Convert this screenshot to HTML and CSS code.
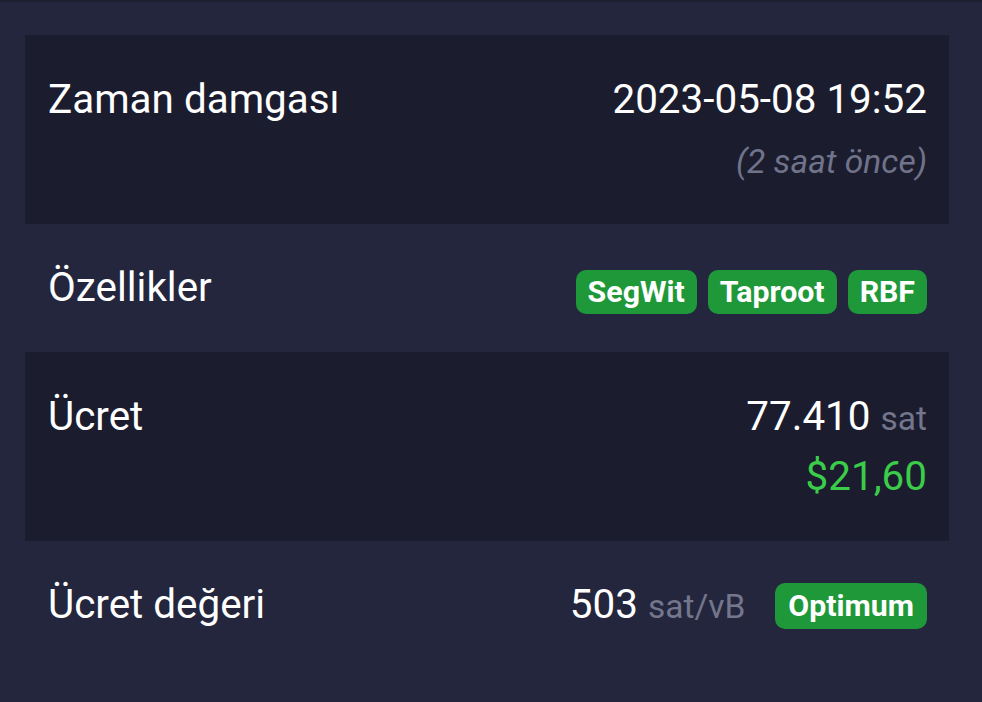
FILE: index.html
```html
<!DOCTYPE html>
<html lang="tr">
<head>
  <meta charset="UTF-8" />
  <meta name="viewport" content="width=device-width, initial-scale=1" />
  <title>İşlem</title>
  <link rel="stylesheet" href="styles.css">
</head>
<body>

<div class="box">
  <table class="details">
    <tbody>
      <tr class="dark">
        <td class="label">Zaman damgası</td>
        <td class="value">
          <div>2023-05-08 19:52</div>
          <div><i class="ago">(2 saat önce)</i></div>
        </td>
      </tr>
      <tr>
        <td class="label">Özellikler</td>
        <td class="value">
          <span class="features">
            <span class="badge">SegWit</span>
            <span class="badge">Taproot</span>
            <span class="badge">RBF</span>
          </span>
        </td>
      </tr>
      <tr class="dark">
        <td class="label">Ücret</td>
        <td class="value">
          <div>77.410 <span class="unit">sat</span></div>
          <div class="fiat">$21,60</div>
        </td>
      </tr>
      <tr>
        <td class="label">Ücret değeri</td>
        <td class="value">
          503 <span class="unit">sat/vB</span>
          <span class="badge big">Optimum</span>
        </td>
      </tr>
    </tbody>
  </table>
</div>

</body>
</html>
```

FILE: styles.css
```css
html, body {
  margin: 0;
  padding: 0;
  height: 100%;
  overflow: hidden;
  background: #24263d;
  color: #fff;
  font-family: Roboto, "Liberation Sans", sans-serif;
}

body {
  border-top: 2px solid #1e2032;
  box-sizing: border-box;
}

.box {
  padding: 33px 33px 0 25px;
}

.details {
  width: 924px;
  border-collapse: collapse;
  font-size: 40.4px;
  line-height: 60px;
}

.details td {
  padding: 34.5px 22px 34px 23px;
  vertical-align: top;
}

.details tr.dark {
  background: #1b1d2e;
}

.label {
  text-align: left;
  white-space: nowrap;
}

.value {
  text-align: right;
  white-space: nowrap;
}

.ago {
  font-size: 33.6px;
  line-height: 1;
  color: #70738a;
}

.unit {
  font-size: 33.5px;
  line-height: 1;
  color: #73768c;
}

.fiat {
  color: #3bcc49;
}

.features {
  display: inline-flex;
  gap: 11px;
  position: relative;
  top: 1px;
}

.badge {
  display: inline-block;
  background: #1f983a;
  color: #fff;
  font-size: 30.3px;
  font-weight: 700;
  line-height: 1;
  padding: 7px 12px;
  border-radius: 10px;
}

.badge.big {
  padding: 8px 13px;
  margin-left: 20px;
  position: relative;
  top: -2px;
}
```
